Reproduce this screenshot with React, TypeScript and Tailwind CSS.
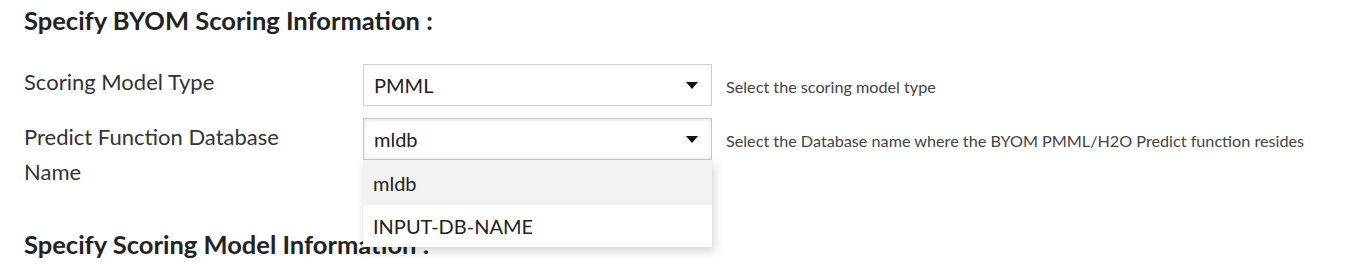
const font = { fontFamily: "Lato, 'Noto Sans', sans-serif" };

function Caret() {
  return (
    <svg width="12" height="7" viewBox="0 0 12 7" className="shrink-0">
      <path d="M0 0h12L6 7z" fill="#111" />
    </svg>
  );
}

function SelectBox({ value, focused }: { value: string; focused?: boolean }) {
  return (
    <div
      className={`flex h-[42px] w-[349px] items-center justify-between border bg-white pl-[10px] pr-[13px] text-[20px] text-[#222] ${
        focused ? "border-[#c8c8c8] shadow-[inset_0_1px_4px_rgba(0,0,0,0.12)]" : "border-[#cfcfcf]"
      }`}
    >
      <span>{value}</span>
      <Caret />
    </div>
  );
}

export default function App() {
  return (
    <div className="min-h-[274px] bg-white px-6 pt-[5px] text-[#333]" style={font}>
      <h2 className="text-[25.5px] font-bold leading-[30px] text-[#222]">Specify BYOM Scoring Information :</h2>

      <div className="mt-[29px] grid grid-cols-[339px_349px_1fr] items-start gap-y-[12px]">
        <div className="pt-[3px] text-[22px] leading-[30px]">Scoring Model Type</div>
        <SelectBox value="PMML" />
        <div className="pl-[14px] pt-[13px] text-[16.2px] leading-[20px] text-[#444]">Select the scoring model type</div>

        <div className="pt-[1px] text-[22px] leading-[35px]">
          Predict Function Database
          <br />
          Name
        </div>
        <div className="relative">
          <SelectBox value="mldb" focused />
          <ul className="absolute left-0 top-[42px] z-10 w-[349px] bg-white text-[20px] text-[#222] shadow-[2px_4px_10px_rgba(0,0,0,0.18)]">
            <li className="flex h-[45px] items-center bg-[#f2f2f2] px-[10px]">mldb</li>
            <li className="flex h-[42px] items-center px-[10px]">INPUT-DB-NAME</li>
          </ul>
        </div>
        <div className="pl-[14px] pt-[13px] text-[16.2px] leading-[20px] text-[#444]">
          Select the Database name where the BYOM PMML/H2O Predict function resides
        </div>
      </div>

      <h2 className="mt-[40px] text-[25.5px] font-bold leading-[30px] text-[#222]">Specify Scoring Model Information :</h2>
    </div>
  );
}
